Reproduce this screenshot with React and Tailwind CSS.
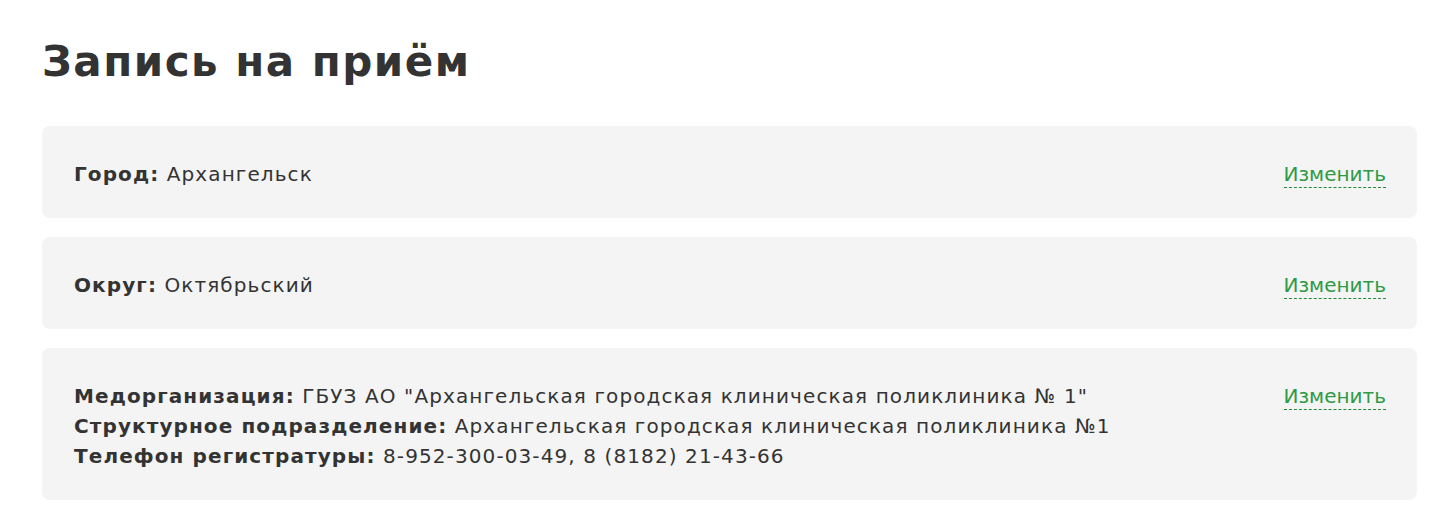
import React from "react";

const rows = [
  { id: "city", lines: [["Город:", "Архангельск"]] },
  { id: "district", lines: [["Округ:", "Октябрьский"]] },
  {
    id: "org",
    lines: [
      ["Медорганизация:", 'ГБУЗ АО "Архангельская городская клиническая поликлиника № 1"'],
      ["Структурное подразделение:", "Архангельская городская клиническая поликлиника №1"],
      ["Телефон регистратуры:", "8-952-300-03-49, 8 (8182) 21-43-66"],
    ],
  },
];

export default function App() {
  return (
    <div
      className="bg-white pl-[42px] pr-[36px] pt-[26px] pb-8 text-[#333333]"
      style={{ fontFamily: '"DejaVu Sans", "Open Sans", sans-serif' }}
    >
      <h1 className="text-[42px] font-bold leading-[72px] tracking-[1.5px] mb-[28px]">
        Запись на приём
      </h1>

      <div className="flex flex-col gap-[19px]">
        {rows.map((row) => (
          <div
            key={row.id}
            className="flex justify-between items-start bg-[#f4f4f4] rounded-lg pl-8 pr-[31px] pt-[33px] pb-[29px]"
          >
            <div className="text-[20px] leading-[30px] tracking-[1.1px]">
              {row.lines.map(([label, value]) => (
                <div key={label}>
                  <span className="font-bold">{label}</span> {value}
                </div>
              ))}
            </div>
            <button className="text-[20px] leading-[26px] text-[#2e9a46] border-b border-dashed border-[#23883b] mt-[2px]">
              Изменить
            </button>
          </div>
        ))}
      </div>
    </div>
  );
}
